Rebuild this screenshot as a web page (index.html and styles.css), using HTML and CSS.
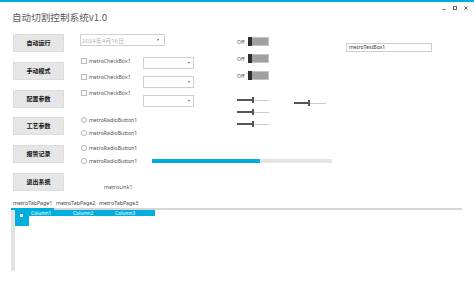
FILE: index.html
```html
<!DOCTYPE html>
<html lang="zh-CN">
<head>
<meta charset="utf-8">
<title>自动切割控制系统v1.0</title>
<link rel="stylesheet" href="styles.css">
</head>
<body>
<div class="window">
  <div class="topbar"></div>
  <header class="head">
    <h1 class="title">自动切割控制系统v1.0</h1>
    <div class="winctl">
      <span><svg viewBox="0 0 4 4"><line x1="0.5" y1="3.5" x2="3.5" y2="3.5" stroke="#555" stroke-width="0.9"/></svg></span>
      <span><svg viewBox="0 0 4 4"><rect x="0.5" y="0.5" width="3" height="3" fill="none" stroke="#555" stroke-width="0.9"/></svg></span>
      <span><svg viewBox="0 0 4 4"><path d="M0.5 0.5 L3.5 3.5 M3.5 0.5 L0.5 3.5" stroke="#555" stroke-width="0.9"/></svg></span>
    </div>
  </header>

  <main class="body">
    <nav class="btns">
      <button class="btn">自动运行</button>
      <button class="btn">手动模式</button>
      <button class="btn">配置参数</button>
      <button class="btn">工艺参数</button>
      <button class="btn">报警记录</button>
      <button class="btn">退出系统</button>
    </nav>

    <section class="mid">
      <div class="date"><span>2024年4月16日</span><i class="caret"></i></div>
      <div class="pair">
        <ul class="checks">
          <li class="check"><span class="box"></span>metroCheckBox1</li>
          <li class="check"><span class="box"></span>metroCheckBox1</li>
          <li class="check"><span class="box"></span>metroCheckBox1</li>
        </ul>
        <div class="combos">
          <div class="combo"><i class="caret"></i></div>
          <div class="combo"><i class="caret"></i></div>
          <div class="combo"><i class="caret"></i></div>
        </div>
      </div>
      <div class="radios">
        <div class="rgroup">
          <div class="rlist">
            <div class="radio"><span class="dot"></span>metroRadioButton1</div>
            <div class="radio"><span class="dot"></span>metroRadioButton1</div>
          </div>
        </div>
        <div class="rgroup">
          <div class="rlist">
            <div class="radio"><span class="dot"></span>metroRadioButton1</div>
            <div class="radio"><span class="dot"></span>metroRadioButton1</div>
          </div>
          <div class="progress"><div class="fill" style="width:60%"></div></div>
        </div>
      </div>
      <a class="link" href="#">metroLink1</a>
    </section>

    <section class="switches">
      <div class="toggles">
        <div class="tg"><span class="tg-label">Off</span><span class="tg-track"><i class="tg-thumb"></i></span></div>
        <div class="tg"><span class="tg-label">Off</span><span class="tg-track"><i class="tg-thumb"></i></span></div>
        <div class="tg"><span class="tg-label">Off</span><span class="tg-track"><i class="tg-thumb"></i></span></div>
      </div>
      <div class="sliders">
        <div class="slider"><i class="s-done"></i><i class="s-thumb"></i><i class="s-rest"></i></div>
        <div class="slider"><i class="s-done"></i><i class="s-thumb"></i><i class="s-rest"></i></div>
        <div class="slider"><i class="s-done"></i><i class="s-thumb"></i><i class="s-rest"></i></div>
      </div>
    </section>

    <section class="solo">
      <div class="slider slider-4"><i class="s-done"></i><i class="s-thumb"></i><i class="s-rest"></i></div>
    </section>

    <section class="textcol">
      <div class="tbox">metroTextBox1</div>
    </section>
  </main>

  <section class="tabs">
    <div class="tabstrip">
      <div class="tab active">metroTabPage1</div>
      <div class="tab">metroTabPage2</div>
      <div class="tab">metroTabPage3</div>
    </div>
    <div class="grid">
      <div class="gside"></div>
      <div class="gmain">
        <div class="corner"><i></i></div>
        <div class="ghead">
          <span class="col">Column1</span>
          <span class="col">Column2</span>
          <span class="col">Column3</span>
        </div>
      </div>
    </div>
  </section>
</div>
</body>
</html>
```

FILE: styles.css
```css
* { box-sizing: border-box; margin: 0; padding: 0; }
html, body { background: #fff; }
body {
  width: 474px;
  height: 285px;
  overflow: hidden;
  font-family: "Noto Sans", "Noto Sans CJK SC", sans-serif;
  color: #333;
}
i { display: block; }

.window { width: 474px; height: 285px; display: flex; flex-direction: column; }
.topbar { height: 2px; background: #00aedb; flex: none; }

.head {
  height: 32px;
  flex: none;
  display: flex;
  justify-content: space-between;
  align-items: flex-start;
  padding: 0 3px 0 12px;
}
.title {
  margin-top: 9px;
  font-family: "Noto Sans CJK SC", "Noto Sans", sans-serif;
  font-size: 9.6px;
  line-height: 12px;
  font-weight: 400;
  color: #5a5a5a;
}
.winctl { display: flex; margin-top: 3px; }
.winctl span { width: 11px; height: 6px; display: flex; justify-content: center; align-items: center; }
.winctl svg { width: 4px; height: 4px; display: block; }

/* main body */
.body {
  height: 158px;
  flex: none;
  display: flex;
  align-items: flex-start;
  padding-left: 13px;
}
.btns { width: 51px; flex: none; display: flex; flex-direction: column; gap: 9.8px; margin-right: 16px; }
.btn {
  height: 18px;
  background: #e6e6e6;
  border: 1px solid #dddddd;
  font-family: "Noto Sans CJK SC", sans-serif;
  font-size: 6px;
  font-weight: 700;
  line-height: 16px;
  color: #111;
  text-align: center;
}

.mid { width: 157px; flex: none; display: flex; flex-direction: column; align-items: flex-start; }
.date {
  width: 85px;
  height: 12px;
  border: 1px solid #d0d0d0;
  display: flex;
  align-items: center;
  justify-content: space-between;
  padding: 0 5px 0 1px;
  font-family: "Noto Sans", "Noto Sans CJK SC", sans-serif;
  font-size: 6px;
  color: #b5b5b5;
}
.caret {
  width: 0;
  height: 0;
  border-left: 1.5px solid transparent;
  border-right: 1.5px solid transparent;
  border-top: 2px solid #666;
}

.pair { display: flex; align-items: flex-start; }
.checks { width: 63px; margin-top: 7px; list-style: none; }
.check, .radio {
  display: flex;
  align-items: center;
  gap: 2px;
  padding-left: 1px;
  font-size: 5.2px;
  color: #505050;
}
.check { height: 16px; }
.box { width: 6px; height: 6px; border: 1px solid #b8b8b8; flex: none; }
.combos { margin-top: 11px; display: flex; flex-direction: column; gap: 7px; }
.combo {
  width: 51px;
  height: 12px;
  border: 1px solid #d0d0d0;
  display: flex;
  align-items: center;
  justify-content: flex-end;
  padding-right: 3px;
}

.radios { margin-top: 6.5px; display: flex; flex-direction: column; gap: 2px; }
.rgroup { display: flex; align-items: flex-start; }
.rlist { width: 72px; flex: none; }
.radio { height: 13px; }
.dot { width: 6px; height: 6px; border: 1px solid #b8b8b8; border-radius: 50%; flex: none; }
.progress { margin-top: 17.5px; width: 180px; height: 4px; background: #e4e4e4; flex: none; }
.fill { height: 100%; background: #00aedb; }
.link {
  margin: 15.5px 0 0 24px;
  font-size: 5.3px;
  line-height: 8px;
  color: #555;
  text-decoration: none;
}

/* toggles and sliders */
.switches { width: 57px; flex: none; display: flex; flex-direction: column; }
.toggles { margin-top: 3px; display: flex; flex-direction: column; gap: 8px; }
.tg { height: 9px; display: flex; align-items: center; }
.tg-label { width: 11px; font-size: 5px; color: #555; }
.tg-track {
  width: 21px;
  height: 9px;
  display: flex;
  background: #a0a0a0;
  box-shadow: inset 0 0 0 1px #c4c4c4;
}
.tg-thumb { width: 4px; height: 9px; background: #2e2e2e; }

.sliders { margin-top: 14px; }
.slider { width: 32px; height: 12px; display: flex; align-items: center; }
.s-done { width: 15px; height: 1.5px; background: #555; }
.s-thumb { width: 2px; height: 6px; background: #555; }
.s-rest { flex: 1; height: 1px; background: #cccccc; }
.solo { width: 52px; flex: none; margin-top: 63px; }
.slider-4 .s-done { width: 14px; }

.textcol { width: 86px; flex: none; }
.tbox {
  margin-top: 9px;
  width: 86px;
  height: 9px;
  border: 1px solid #cfcfcf;
  padding-left: 2px;
  font-size: 5.1px;
  line-height: 7px;
  color: #333;
}

/* tabs */
.tabs { margin-top: 6px; padding-left: 11px; flex: none; }
.tabstrip { width: 451px; display: flex; border-bottom: 2px solid #d6d6d6; }
.tab {
  width: 43px;
  height: 12px;
  margin-bottom: -2px;
  padding-left: 2px;
  border-bottom: 2px solid transparent;
  font-size: 5.3px;
  line-height: 10px;
  color: #444;
  white-space: nowrap;
}
.tab.active { border-bottom-color: #00aedb; }

.grid { display: flex; height: 61px; }
.gside { width: 4px; background: #e3e3e3; }
.gmain { display: flex; align-items: flex-start; }
.corner { width: 14px; height: 16px; background: #00aedb; padding: 4px 0 0 5px; }
.corner i { width: 3px; height: 3px; background: #fff; }
.ghead { display: flex; height: 6px; background: #00aedb; }
.col {
  width: 42px;
  padding-left: 2px;
  font-size: 4.8px;
  line-height: 6px;
  color: #fff;
  white-space: nowrap;
}
```
